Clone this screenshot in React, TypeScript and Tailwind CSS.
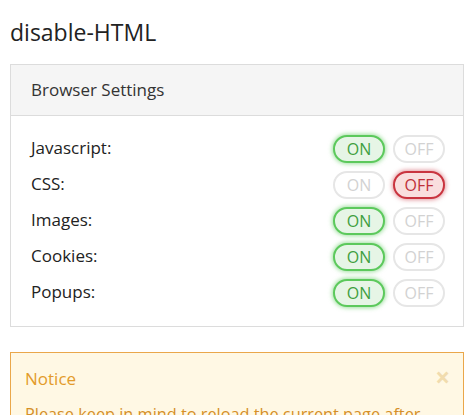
import React from "react";

const settings = [
  { name: "Javascript", on: true },
  { name: "CSS", on: false },
  { name: "Images", on: true },
  { name: "Cookies", on: true },
  { name: "Popups", on: true },
];

function Toggle({ on }: { on: boolean }) {
  return (
    <div className="flex gap-2">
      <button
        className={
          on
            ? "w-[52px] h-[28px] rounded-full border-2 border-[#5cc95c] bg-[#e6f5e6] text-[#3f9f3f] text-[16px] shadow-[0_0_4px_1px_rgba(92,201,92,0.6)]"
            : "w-[52px] h-[28px] rounded-full border-2 border-[#e6e6e6] bg-white text-[#d2d2d2] text-[16px]"
        }
      >
        ON
      </button>
      <button
        className={
          !on
            ? "w-[52px] h-[28px] rounded-full border-2 border-[#c9343f] bg-[#f9dede] text-[#c0303a] text-[16px] shadow-[0_0_4px_1px_rgba(201,52,63,0.5)]"
            : "w-[52px] h-[28px] rounded-full border-2 border-[#e6e6e6] bg-white text-[#d2d2d2] text-[16px]"
        }
      >
        OFF
      </button>
    </div>
  );
}

export default function App() {
  return (
    <div className="w-[474px] h-[415px] overflow-hidden bg-white px-[10px] font-['Open_Sans',sans-serif] text-[#333]">
      {/* Title */}
      <h1 className="pt-[17px] text-[23px] leading-[31px] text-[#222]">disable-HTML</h1>

      {/* Settings panel */}
      <div className="mt-[16px] border border-[#dcdcdc]">
        <div className="h-[51px] flex items-center px-[20px] bg-[#f5f5f5] border-b border-[#dcdcdc] text-[17px] text-[#333]">
          Browser Settings
        </div>
        <div className="flex flex-col gap-2 pt-[19px] pb-[19px] pl-[20px] pr-[18px]">
          {settings.map((s) => (
            <div key={s.name} className="flex items-center justify-between h-[28px]">
              <span className="text-[17px] text-[#222] -mt-[2px]">{s.name}:</span>
              <Toggle on={s.on} />
            </div>
          ))}
        </div>
      </div>

      {/* Notice */}
      <div className="mt-[25px] border border-[#eaa74a] bg-[#fff8e4] px-[14px] pt-[13px]">
        <div className="flex items-start justify-between">
          <span className="text-[17px] text-[#e39b2a] leading-[26px]">Notice</span>
          <span className="text-[26px] leading-[22px] text-[#f1dcae] font-bold -mr-[1px]">×</span>
        </div>
        <p className="mt-[11px] text-[16.3px] text-[#d58f28] leading-[22px]">
          Please keep in mind to reload the current page after
        </p>
      </div>
    </div>
  );
}
